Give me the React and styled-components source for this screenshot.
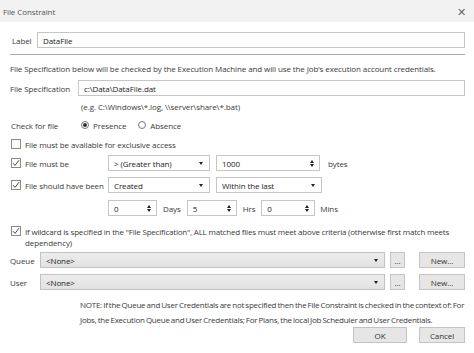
import React from 'react';
import styled, { createGlobalStyle } from 'styled-components';

const GlobalStyle = createGlobalStyle`
  html, body {
    margin: 0;
    padding: 0;
    background: #ffffff;
  }
  body {
    font-family: "Open Sans", "Noto Sans", sans-serif;
    font-size: 8px;
    letter-spacing: -0.1px;
    color: #3a3a3a;
  }
`;

const Dialog = styled.div`
  width: 474px;
  height: 353px;
  background: #ffffff;
  display: flex;
  flex-direction: column;
  overflow: hidden;
`;

const TitleBar = styled.div`
  height: 22px;
  flex: 0 0 22px;
  background: #f2f2f2;
  display: flex;
  align-items: center;
  justify-content: space-between;
  padding: 0 8px 0 3px;
  color: #555;
`;

const Close = styled.span`
  font-size: 11px;
  color: #666;
  line-height: 1;
`;

const Body = styled.div`
  padding: 10px 9px 0 10px;
  display: flex;
  flex-direction: column;
`;

const Row = styled.div`
  display: flex;
  align-items: center;
  height: ${p => p.h || 16}px;
  margin-top: ${p => p.mt || 0}px;
  padding-left: ${p => p.pl || 0}px;
`;

const Label = styled.span`
  width: ${p => p.w ? p.w + 'px' : 'auto'};
  flex: 0 0 auto;
  padding-left: ${p => p.pl || 0}px;
  white-space: nowrap;
`;

const TextBox = styled.div`
  flex: 1;
  height: 16px;
  box-sizing: border-box;
  border: 1px solid #c6c6c6;
  background: #fff;
  display: flex;
  align-items: center;
  padding-left: 5px;
  color: #222;
`;

const Separator = styled.div`
  height: 1px;
  background: #a8a8a8;
  margin: 6px 0 0 0;
`;

const Para = styled.div`
  margin-top: ${p => p.mt || 0}px;
  padding-left: ${p => p.pl || 0}px;
  line-height: ${p => p.lh || 12}px;
  letter-spacing: ${p => p.tight ? '-0.25px' : 'inherit'};
  word-spacing: ${p => p.tight ? '-0.6px' : 'normal'};
`;

const RadioDot = styled.span`
  width: 8px;
  height: 8px;
  border-radius: 50%;
  border: 1px solid #777;
  box-sizing: border-box;
  display: inline-flex;
  align-items: center;
  justify-content: center;
  margin-right: 4px;
  &::after {
    content: '';
    width: 4px;
    height: 4px;
    border-radius: 50%;
    background: ${p => (p.on ? '#333' : 'transparent')};
  }
`;

const RadioOpt = styled.span`
  display: inline-flex;
  align-items: center;
  margin-right: 12px;
`;

const Check = styled.span`
  width: 10px;
  height: 10px;
  box-sizing: border-box;
  border: 1px solid #8a8a8a;
  background: #fff;
  display: inline-flex;
  align-items: center;
  justify-content: center;
  margin-right: 4px;
  flex: 0 0 auto;
`;

const CheckItem = styled.span`
  display: inline-flex;
  align-items: center;
  width: ${p => p.w ? p.w + 'px' : 'auto'};
  flex: 0 0 auto;
  white-space: nowrap;
  letter-spacing: ${p => p.tight ? '-0.2px' : 'inherit'};
`;

const Select = styled.div`
  flex: ${p => p.w ? `0 0 ${p.w}px` : '1'};
  height: 16px;
  box-sizing: border-box;
  border: 1px solid ${p => (p.gray ? '#c2c2c2' : '#c6c6c6')};
  background: ${p => (p.gray ? 'linear-gradient(#ececec, #e2e2e2)' : '#fff')};
  display: flex;
  align-items: center;
  justify-content: space-between;
  padding: 0 6px 0 5px;
  margin-left: ${p => p.ml || 0}px;
  color: #222;
`;

const Caret = styled.span`
  width: 0;
  height: 0;
  border-left: 2.5px solid transparent;
  border-right: 2.5px solid transparent;
  border-top: 3px solid #222;
`;

const Spin = styled.div`
  flex: 0 0 ${p => p.w}px;
  height: 16px;
  box-sizing: border-box;
  border: 1px solid #c6c6c6;
  background: #fff;
  display: flex;
  align-items: center;
  justify-content: space-between;
  padding: 0 5px 0 5px;
  margin-left: ${p => p.ml || 0}px;
  color: #222;
`;

const Arrows = styled.span`
  display: flex;
  flex-direction: column;
  gap: 1px;
  &::before, &::after {
    content: '';
    width: 0;
    height: 0;
    border-left: 2.5px solid transparent;
    border-right: 2.5px solid transparent;
  }
  &::before { border-bottom: 3px solid #222; }
  &::after { border-top: 3px solid #222; }
`;

const Unit = styled.span`
  flex: 0 0 auto;
  margin: 0 ${p => p.mr || 7}px 0 ${p => p.ml || 8}px;
`;

const Button = styled.div`
  flex: 0 0 ${p => p.w}px;
  height: 16px;
  box-sizing: border-box;
  border: 1px solid #c4c4c4;
  background: #e6e6e6;
  display: flex;
  align-items: center;
  justify-content: center;
  color: #333;
  margin-left: ${p => p.ml || 0}px;
`;

const Footer = styled.div`
  display: flex;
  justify-content: flex-end;
  margin-top: 0;
`;

const Tick = () => (
  <svg width="8" height="8" viewBox="0 0 8 8">
    <path d="M1 4.2 L3 6.4 L7 1.2" fill="none" stroke="#333" strokeWidth="0.9" />
  </svg>
);

export default function App() {
  return (
    <>
      <GlobalStyle />
      <Dialog>
        <TitleBar>
          <span>File Constraint</span>
          <Close>✕</Close>
        </TitleBar>
        <Body>
          <Row>
            <Label w={25} pl={2}>Label</Label>
            <TextBox>DataFile</TextBox>
          </Row>
          <Separator />
          <Para mt={8}>
            File Specification below will be checked by the Execution Machine and will use the Job’s execution account credentials.
          </Para>
          <Row mt={5}>
            <Label w={68}>File Specification</Label>
            <TextBox>c:\Data\DataFile.dat</TextBox>
          </Row>
          <Para mt={5} pl={71}>(e.g. C:\Windows\*.log, \\server\share\*.bat)</Para>
          <Row mt={4}>
            <Label w={70} pl={1}>Check for file</Label>
            <RadioOpt><RadioDot on />Presence</RadioOpt>
            <RadioOpt><RadioDot />Absence</RadioOpt>
          </Row>
          <Row mt={3} pl={1}>
            <CheckItem><Check />File must be available for exclusive access</CheckItem>
          </Row>
          <Row mt={3} pl={1}>
            <CheckItem w={97}><Check><Tick /></Check>File must be</CheckItem>
            <Select w={102}>&gt; (Greater than)<Caret /></Select>
            <Spin w={104} ml={6}>1000<Arrows /></Spin>
            <Unit ml={8}>bytes</Unit>
          </Row>
          <Row mt={6} pl={1}>
            <CheckItem w={97}><Check><Tick /></Check>File should have been</CheckItem>
            <Select w={102}>Created<Caret /></Select>
            <Select w={106} ml={6}>Within the last<Caret /></Select>
          </Row>
          <Row mt={7} pl={98}>
            <Spin w={49}>0<Arrows /></Spin>
            <Unit ml={6} mr={6}>Days</Unit>
            <Spin w={50}>5<Arrows /></Spin>
            <Unit ml={6} mr={6}>Hrs</Unit>
            <Spin w={54}>0<Arrows /></Spin>
            <Unit ml={5}>Mins</Unit>
          </Row>
          <Row mt={9} h={12} pl={1}>
            <CheckItem tight><Check><Tick /></Check>If wildcard is specified in the "File Specification", ALL matched files must meet above criteria (otherwise first match meets</CheckItem>
          </Row>
          <Para pl={15}>dependency)</Para>
          <Row mt={3}>
            <Label w={30}>Queue</Label>
            <Select gray>&lt;None&gt;<Caret /></Select>
            <Button w={15} ml={5}>...</Button>
            <Button w={46} ml={14}>New...</Button>
          </Row>
          <Row mt={6}>
            <Label w={30}>User</Label>
            <Select gray>&lt;None&gt;<Caret /></Select>
            <Button w={15} ml={5}>...</Button>
            <Button w={46} ml={14}>New...</Button>
          </Row>
          <Para mt={7} pl={70} lh={15} tight>
            NOTE: If the Queue and User Credentials are not specified then the File Constraint is checked in the context of: For Jobs, the Execution Queue and User Credentials; For Plans, the local Job Scheduler and User Credentials.
          </Para>
          <Footer>
            <Button w={54}>OK</Button>
            <Button w={46} ml={12}>Cancel</Button>
          </Footer>
        </Body>
      </Dialog>
    </>
  );
}
